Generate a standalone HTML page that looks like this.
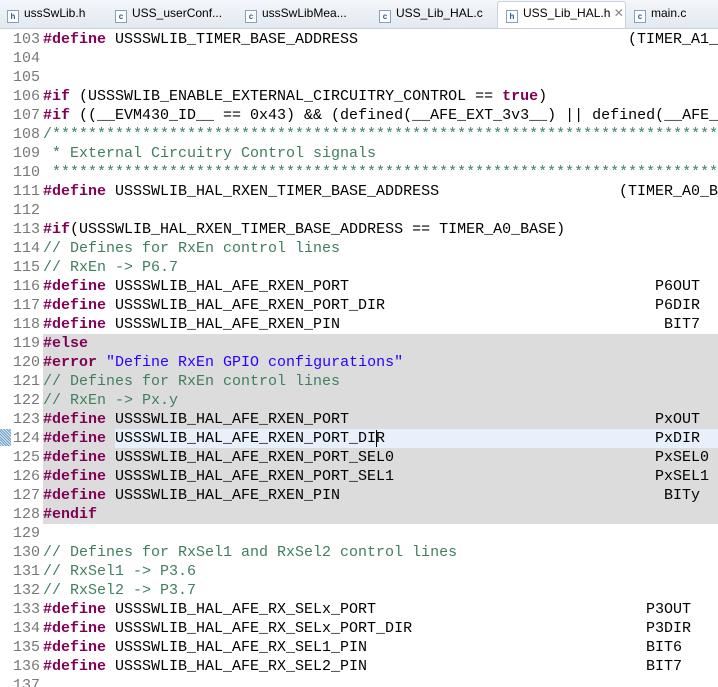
<!DOCTYPE html>
<html><head><style>
body{margin:0;width:718px;height:687px;overflow:hidden;background:#fff;font-family:"Liberation Mono",monospace;position:relative}
#tabs{position:absolute;left:0;top:0;width:718px;height:28px;background:linear-gradient(#f3f6fa,#e3e9f1);border-bottom:1px solid #c9d2de;font-family:"Liberation Sans",sans-serif;font-size:12px;color:#000;overflow:hidden}
.tab{position:absolute;top:6px;white-space:nowrap}
.ic{display:inline-block;width:10px;height:11px;border:1px solid #8aa0b8;background:#fff;font-size:8px;line-height:11px;text-align:center;color:#2a5a9a;margin-right:5px;vertical-align:-2px;font-weight:bold}
.act{position:absolute;left:497px;top:1px;width:127px;height:28px;background:#fff;border:1px solid #c9d2de;border-bottom:none;border-radius:3px 3px 0 0}
.l{position:absolute;left:0;width:718px;height:19px;font-size:15px;line-height:19px;white-space:pre;overflow:hidden}
.n{position:absolute;left:13px;color:#787878}
.c{position:absolute;left:43px;color:#000}
.r{position:absolute}
.k{color:#7f0055;font-weight:bold}
.cm{color:#3f7f5f}
.s{color:#2a00ff}
</style></head><body>
<div id="tabs">
<div class="act"></div>
<div class="tab" style="left:7px"><span class="ic">h</span>ussSwLib.h</div>
<div class="tab" style="left:115px"><span class="ic">c</span>USS_userConf...</div>
<div class="tab" style="left:245px"><span class="ic">c</span>ussSwLibMea...</div>
<div class="tab" style="left:379px"><span class="ic">c</span>USS_Lib_HAL.c</div>
<div class="tab" style="left:506px"><span class="ic">h</span>USS_Lib_HAL.h <span style="color:#888">&#x2715;</span></div>
<div class="tab" style="left:634px"><span class="ic">c</span>main.c</div>
</div>
<div style="position:absolute;left:43px;top:334px;width:675px;height:190px;background:#dcdcdc"></div>
<div style="position:absolute;left:115px;top:429px;width:603px;height:19px;background:#e8f0fb"></div>
<div style="position:absolute;left:0;top:429px;width:11px;height:17px;background:repeating-linear-gradient(45deg,#6aa0c8 0 1px,#dbe8f3 1px 2px)"></div>

<div class="l" style="top:30px"><span class="n">103</span><span class="c"><span class="k">#define</span> USSSWLIB_TIMER_BASE_ADDRESS</span><span class="r" style="left:628px">(TIMER_A1_</span></div>
<div class="l" style="top:49px"><span class="n">104</span></div>
<div class="l" style="top:68px"><span class="n">105</span></div>
<div class="l" style="top:87px"><span class="n">106</span><span class="c"><span class="k">#if</span> (USSSWLIB_ENABLE_EXTERNAL_CIRCUITRY_CONTROL == <span class="k">true</span>)</span></div>
<div class="l" style="top:106px"><span class="n">107</span><span class="c"><span class="k">#if</span> ((__EVM430_ID__ == 0x43) &amp;&amp; (defined(__AFE_EXT_3v3__) || defined(__AFE_</span></div>
<div class="l" style="top:125px"><span class="n">108</span><span class="c cm">/*******************************************************************************</span></div>
<div class="l" style="top:144px"><span class="n">109</span><span class="c cm"> * External Circuitry Control signals</span></div>
<div class="l" style="top:163px"><span class="n">110</span><span class="c cm"> *******************************************************************************</span></div>
<div class="l" style="top:182px"><span class="n">111</span><span class="c"><span class="k">#define</span> USSSWLIB_HAL_RXEN_TIMER_BASE_ADDRESS</span><span class="r" style="left:619px">(TIMER_A0_B</span></div>
<div class="l" style="top:201px"><span class="n">112</span></div>
<div class="l" style="top:220px"><span class="n">113</span><span class="c"><span class="k">#if</span>(USSSWLIB_HAL_RXEN_TIMER_BASE_ADDRESS == TIMER_A0_BASE)</span></div>
<div class="l" style="top:239px"><span class="n">114</span><span class="c cm">// Defines for RxEn control lines</span></div>
<div class="l" style="top:258px"><span class="n">115</span><span class="c cm">// RxEn -&gt; P6.7</span></div>
<div class="l" style="top:277px"><span class="n">116</span><span class="c"><span class="k">#define</span> USSSWLIB_HAL_AFE_RXEN_PORT</span><span class="r" style="left:655px">P6OUT</span></div>
<div class="l" style="top:296px"><span class="n">117</span><span class="c"><span class="k">#define</span> USSSWLIB_HAL_AFE_RXEN_PORT_DIR</span><span class="r" style="left:655px">P6DIR</span></div>
<div class="l" style="top:315px"><span class="n">118</span><span class="c"><span class="k">#define</span> USSSWLIB_HAL_AFE_RXEN_PIN</span><span class="r" style="left:664px">BIT7</span></div>
<div class="l" style="top:334px"><span class="n">119</span><span class="c"><span class="k">#else</span></span></div>
<div class="l" style="top:353px"><span class="n">120</span><span class="c"><span class="k">#error</span> <span class="s">"Define RxEn GPIO configurations"</span></span></div>
<div class="l" style="top:372px"><span class="n">121</span><span class="c cm">// Defines for RxEn control lines</span></div>
<div class="l" style="top:391px"><span class="n">122</span><span class="c cm">// RxEn -&gt; Px.y</span></div>
<div class="l" style="top:410px"><span class="n">123</span><span class="c"><span class="k">#define</span> USSSWLIB_HAL_AFE_RXEN_PORT</span><span class="r" style="left:655px">PxOUT</span></div>
<div class="l" style="top:429px"><span class="n">124</span><span class="c"><span class="k">#define</span> USSSWLIB_HAL_AFE_RXEN_PORT_DIR</span><span class="r" style="left:655px">PxDIR</span></div>
<div class="l" style="top:448px"><span class="n">125</span><span class="c"><span class="k">#define</span> USSSWLIB_HAL_AFE_RXEN_PORT_SEL0</span><span class="r" style="left:655px">PxSEL0</span></div>
<div class="l" style="top:467px"><span class="n">126</span><span class="c"><span class="k">#define</span> USSSWLIB_HAL_AFE_RXEN_PORT_SEL1</span><span class="r" style="left:655px">PxSEL1</span></div>
<div class="l" style="top:486px"><span class="n">127</span><span class="c"><span class="k">#define</span> USSSWLIB_HAL_AFE_RXEN_PIN</span><span class="r" style="left:664px">BITy</span></div>
<div class="l" style="top:505px"><span class="n">128</span><span class="c"><span class="k">#endif</span></span></div>
<div class="l" style="top:524px"><span class="n">129</span></div>
<div class="l" style="top:543px"><span class="n">130</span><span class="c cm">// Defines for RxSel1 and RxSel2 control lines</span></div>
<div class="l" style="top:562px"><span class="n">131</span><span class="c cm">// RxSel1 -&gt; P3.6</span></div>
<div class="l" style="top:581px"><span class="n">132</span><span class="c cm">// RxSel2 -&gt; P3.7</span></div>
<div class="l" style="top:600px"><span class="n">133</span><span class="c"><span class="k">#define</span> USSSWLIB_HAL_AFE_RX_SELx_PORT</span><span class="r" style="left:646px">P3OUT</span></div>
<div class="l" style="top:619px"><span class="n">134</span><span class="c"><span class="k">#define</span> USSSWLIB_HAL_AFE_RX_SELx_PORT_DIR</span><span class="r" style="left:646px">P3DIR</span></div>
<div class="l" style="top:638px"><span class="n">135</span><span class="c"><span class="k">#define</span> USSSWLIB_HAL_AFE_RX_SEL1_PIN</span><span class="r" style="left:646px">BIT6</span></div>
<div class="l" style="top:657px"><span class="n">136</span><span class="c"><span class="k">#define</span> USSSWLIB_HAL_AFE_RX_SEL2_PIN</span><span class="r" style="left:646px">BIT7</span></div>
<div class="l" style="top:676px;height:11px"><span class="n">137</span></div>
<div style="position:absolute;left:376px;top:430px;width:1px;height:17px;background:#000"></div>
</body></html>
